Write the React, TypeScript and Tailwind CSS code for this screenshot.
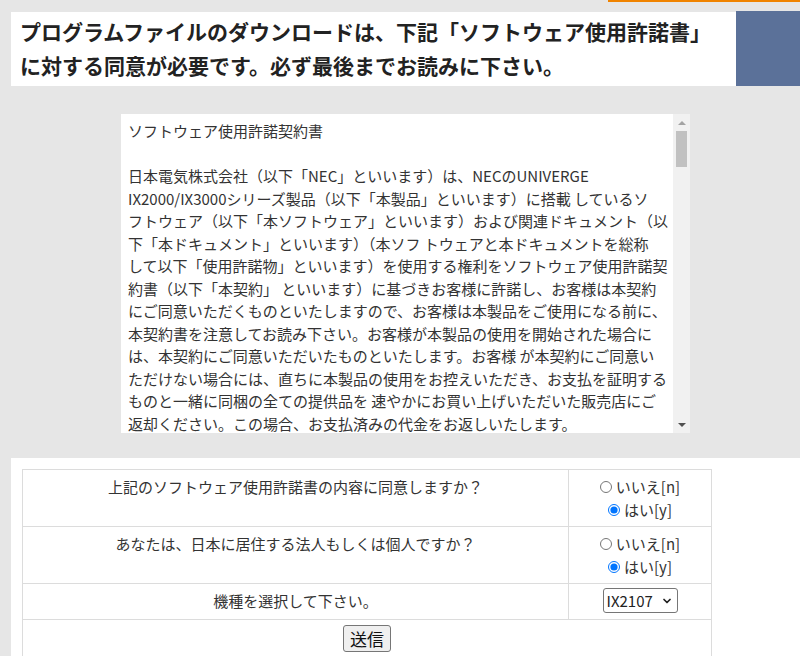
import { ChevronDown } from 'lucide-react';

const licenseLines = [
  'ソフトウェア使用許諾契約書',
  '',
  '日本電気株式会社（以下「NEC」といいます）は、NECのUNIVERGE',
  'IX2000/IX3000シリーズ製品（以下「本製品」といいます）に搭載 しているソ',
  'フトウェア（以下「本ソフトウェア」といいます）および関連ドキュメント（以',
  '下「本ドキュメント」といいます）（本ソフ トウェアと本ドキュメントを総称',
  'して以下「使用許諾物」といいます）を使用する権利をソフトウェア使用許諾契',
  '約書（以下「本契約」 といいます）に基づきお客様に許諾し、お客様は本契約',
  'にご同意いただくものといたしますので、お客様は本製品をご使用になる前に、',
  '本契約書を注意してお読み下さい。お客様が本製品の使用を開始された場合に',
  'は、本契約にご同意いただいたものといたします。お客様 が本契約にご同意い',
  'ただけない場合には、直ちに本製品の使用をお控えいただき、お支払を証明する',
  'ものと一緒に同梱の全ての提供品を 速やかにお買い上げいただいた販売店にご',
  '返却ください。この場合、お支払済みの代金をお返しいたします。',
];

function YesNo({ name }: { name: string }) {
  return (
    <div className="flex flex-col items-center">
      <label className="flex items-center h-[23px]">
        <input type="radio" name={name} className="w-[12px] h-[12px] m-0 mr-[4px]" />
        いいえ[n]
      </label>
      <label className="flex items-center h-[23px]">
        <input type="radio" name={name} defaultChecked className="w-[12px] h-[12px] m-0 mr-[4px]" />
        はい[y]
      </label>
    </div>
  );
}

function FakeScrollbar() {
  return (
    <div className="w-[17px] bg-[#f1f1f1] flex flex-col items-center shrink-0">
      <div className="h-[17px] flex items-center justify-center">
        <div className="w-0 h-0 border-l-[4px] border-r-[4px] border-b-[4px] border-l-transparent border-r-transparent border-b-[#a3a3a3]" />
      </div>
      <div className="w-[11px] h-[36px] bg-[#c1c1c1]" />
      <div className="flex-1" />
      <div className="h-[17px] flex items-center justify-center">
        <div className="w-0 h-0 border-l-[4px] border-r-[4px] border-t-[4px] border-l-transparent border-r-transparent border-t-[#505050]" />
      </div>
    </div>
  );
}

export default function App() {
  return (
    <div
      className="w-full h-[656px] overflow-hidden bg-[#e6e6e6] text-[#333]"
      style={{ fontFamily: '"Noto Sans CJK JP", "Noto Sans", sans-serif' }}
    >
      {/* top accent */}
      <div className="h-[11px] flex">
        <div className="ml-auto w-[192px] h-[2px] bg-[#f08300]" />
      </div>

      {/* heading */}
      <div className="flex">
        <div className="ml-[11px] mt-[1px] w-[725px] h-[74px] bg-white pl-[9px] pt-[2px] text-[21px] leading-[34px] font-bold text-[#222] whitespace-nowrap">
          プログラムファイルのダウンロードは、下記「ソフトウェア使用許諾書」
          <br />
          に対する同意が必要です。必ず最後までお読みに下さい。
        </div>
        <div className="flex-1 h-[75px] bg-[#5b7199]" />
      </div>

      {/* license text */}
      <div className="mt-[28px] ml-[121px] w-[569px] h-[319px] bg-white flex">
        <div className="flex-1 overflow-hidden pl-[7px] pt-[6px] text-[15px] leading-[22.5px] text-[#333]">
          {licenseLines.map((line, i) => (
            <div key={i} className="whitespace-nowrap h-[22.5px]">
              {line}
            </div>
          ))}
        </div>
        <FakeScrollbar />
      </div>

      {/* form */}
      <div className="mt-[25px] ml-[11px] bg-white pt-[11px] pl-[11px] h-[300px]">
        <table className="w-[690px] border-collapse text-[15px] leading-[23px] text-[#333]">
          <tbody>
            <tr>
              <td className="w-[546px] h-[57px] border border-[#dcdcdc] text-center align-top py-[5px]">
                上記のソフトウェア使用許諾書の内容に同意しますか？
              </td>
              <td className="border border-[#dcdcdc] align-top py-[5px]">
                <YesNo name="agree" />
              </td>
            </tr>
            <tr>
              <td className="h-[57px] border border-[#dcdcdc] text-center align-top py-[5px]">
                あなたは、日本に居住する法人もしくは個人ですか？
              </td>
              <td className="border border-[#dcdcdc] align-top py-[5px]">
                <YesNo name="resident" />
              </td>
            </tr>
            <tr>
              <td className="h-[36px] border border-[#dcdcdc] text-center align-top py-[5px]">
                機種を選択して下さい。
              </td>
              <td className="border border-[#dcdcdc] align-top pt-[4px] pb-[5px]">
                <div className="flex justify-center">
                  <div className="relative w-[75px] h-[25px]">
                    <select
                      defaultValue="IX2107"
                      className="appearance-none w-full h-full border border-[#767676] rounded-[3px] bg-white pl-[3px] pr-[16px] text-[15px] leading-[23px] text-[#222]"
                    >
                      <option>IX2107</option>
                      <option>IX2105</option>
                      <option>IX2207</option>
                    </select>
                    <ChevronDown
                      size={12}
                      strokeWidth={3.5}
                      className="absolute right-[5px] top-[7px] text-[#222] pointer-events-none"
                    />
                  </div>
                </div>
              </td>
            </tr>
            <tr>
              <td colSpan={2} className="border border-[#dcdcdc] text-center align-top pt-[5px] pb-[6px]">
                <button className="h-[27px] px-[6px] bg-[#efefef] border border-[#767676] rounded-[3px] text-[17px] leading-[25px] text-[#111]">
                  送信
                </button>
              </td>
            </tr>
          </tbody>
        </table>
      </div>
    </div>
  );
}
